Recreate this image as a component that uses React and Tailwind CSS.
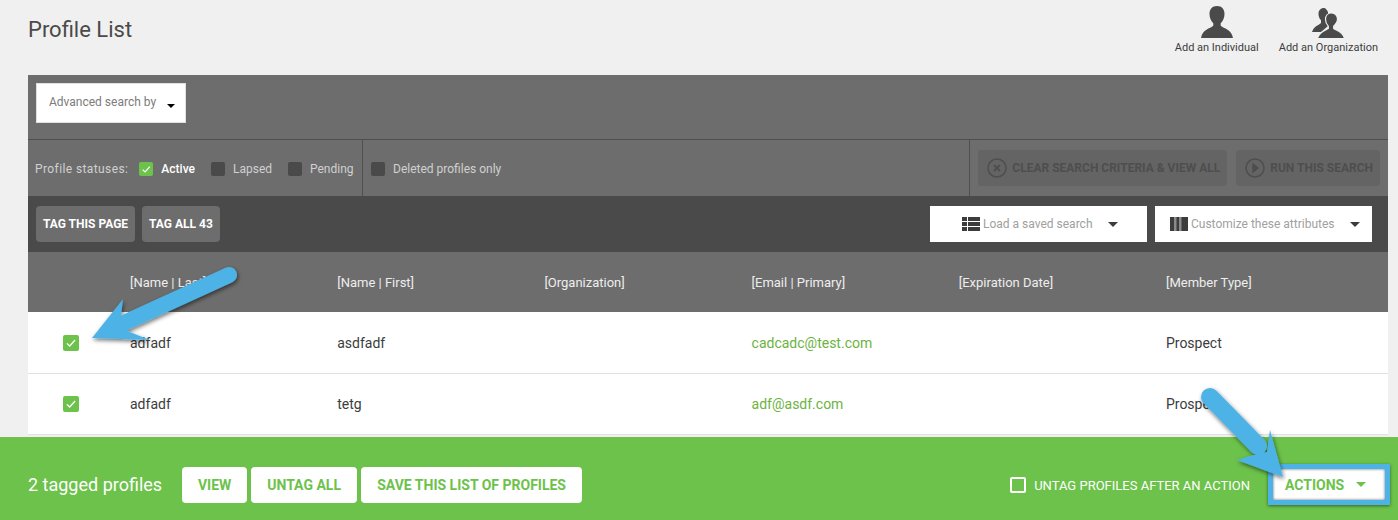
const columns = ["[Name | Last]", "[Name | First]", "[Organization]", "[Email | Primary]", "[Expiration Date]", "[Member Type]"];

const rows = [
  { last: "adfadf", first: "asdfadf", email: "cadcadc@test.com", type: "Prospect", height: "h-[62px]" },
  { last: "adfadf", first: "tetg", email: "adf@asdf.com", type: "Prospect", height: "h-[61px]" },
];

function Caret({ className }) {
  return <span className={`inline-block h-0 w-0 border-x-transparent ${className}`} />;
}

function GreenCheck({ size }) {
  return (
    <span className={`flex items-center justify-center rounded-[2px] bg-[#6cc24a] ${size}`}>
      <svg viewBox="0 0 16 16" className="h-3/4 w-3/4" fill="none" stroke="#fff" strokeWidth="1.8">
        <path d="M2.5 8.5 L6.2 12 L13.5 4" />
      </svg>
    </span>
  );
}

function StatusBox({ label }) {
  return (
    <div className="flex items-center gap-2">
      <span className="h-[14px] w-[14px] rounded-[2px] bg-[#4a4a4a]" />
      <span className="text-xs text-[#d0d0d0]">{label}</span>
    </div>
  );
}

function PersonIcon() {
  return (
    <svg viewBox="0 0 32 32" className="h-8 w-8" fill="#4a4a4a">
      <path d="M16 0c-5 0-7.5 3.4-7.5 8 0 3.6 1.6 7.200 3.800 9.200v2.600C9 22.600 1.600 23.400 0 32h32c-1.600-8.600-9-9.400-12.300-12.200v-2.600c2.200-2 3.800-5.600 3.800-9.200 0-4.600-2.500-8-7.500-8z" />
    </svg>
  );
}

function GroupIcon() {
  return (
    <svg viewBox="0 0 32 32" className="h-8 w-8" fill="#4a4a4a">
      <path d="M12 2C8.500 2 6.500 4.500 6.500 8c0 2.600 1 4.800 2.500 6.300V17c-2 2-7 3-9 9h9l7-6V6C14.500 3.500 13.500 2 12 2z" />
      <path stroke="#f0f0f0" strokeWidth="1.200" d="M19.500 7c-3.800 0-6 2.700-6 6.200 0 2.800 1.200 5.400 2.800 7v2.300C13.500 24.500 7.500 25 5.500 32.500h27c-1.800-7.500-8-8-10.800-10v-2.300c1.600-1.600 3.800-4.400 3.800-7C25.500 9.700 23.300 7 19.500 7z" />
    </svg>
  );
}

function ListIcon() {
  return (
    <svg viewBox="0 0 18 14" className="h-[14px] w-[18px]" fill="#3c3c3c">
      <path d="M0 0h5v4H0zM6 0h12v4H6zM0 5h5v4H0zM6 5h12v4H6zM0 10h5v4H0zM6 10h12v4H6z" />
    </svg>
  );
}

function ColumnsIcon() {
  return (
    <svg viewBox="0 0 18 14" className="h-[14px] w-[18px]" fill="#3c3c3c">
      <path fill="#8a8a8a" d="M0 0h18v14H0z" />
      <path d="M0 0h4v14H0zM6.500 0h2.500v14H6.500zM11.500 0h6.500v14h-6.500z" />
    </svg>
  );
}

function DisabledButton({ icon, label }) {
  return (
    <div className="flex h-9 items-center gap-[5px] rounded bg-[#646464] pl-[9px] pr-[7px] text-xs font-bold text-[#4e4e4e]">
      <svg viewBox="0 0 20 20" className="h-5 w-5" fill="none" stroke="#4e4e4e" strokeWidth="1.500">
        <circle cx="10" cy="10" r="9" />
        {icon === "x" ? <path d="M7 7l6 6M13 7l-6 6" strokeWidth="1.800" /> : <path d="M8 6l5 4-5 4z" fill="#4e4e4e" />}
      </svg>
      {label}
    </div>
  );
}

function Arrow({ line, head, width }) {
  return (
    <svg viewBox="0 0 1398 520" className="pointer-events-none absolute left-0 top-0 h-[520px] w-[1398px]">
      <defs>
        <filter id="arrowShadow" x="-30%" y="-30%" width="160%" height="160%">
          <feDropShadow dx="1" dy="2" stdDeviation="2" floodColor="#000" floodOpacity="0.55" />
        </filter>
      </defs>
      <g filter="url(#arrowShadow)" fill="#4db3e6" stroke="#4db3e6">
        <path d={line} strokeWidth={width} strokeLinecap="round" fill="none" />
        <polygon points={head} strokeWidth="0" />
      </g>
    </svg>
  );
}

export default function App() {
  return (
    <div className="relative h-[520px] w-[1398px] overflow-hidden bg-[#f0f0f0] font-['Roboto',sans-serif]">
      {/* Header */}
      <div className="flex h-[75px] items-start justify-between pl-7 pr-5">
        <h1 className="mt-4 text-[22px] leading-7 text-[#4a4a4a]">Profile List</h1>
        <div className="mt-[6px] flex gap-5">
          <div className="flex flex-col items-center gap-[2px] text-[11px] leading-4 text-[#3c3c3c]">
            <PersonIcon />
            Add an Individual
          </div>
          <div className="flex flex-col items-center gap-[2px] text-[11px] leading-4 text-[#3c3c3c]">
            <GroupIcon />
            Add an Organization
          </div>
        </div>
      </div>

      <div className="ml-7 w-[1360px]">
        {/* Search */}
        <div className="h-[65px] border-b border-[#4f4f4f] bg-[#6d6d6d] pl-2 pt-2">
          <div className="flex h-10 w-[150px] items-center gap-[11px] border border-[#e0e0e0] bg-white pb-[2px] pl-[12px] text-xs text-[#7c7c7c]">
            Advanced search by
            <Caret className="mt-[8px] border-x-[4px] border-t-[4px] border-t-black" />
          </div>
        </div>

        {/* Statuses */}
        <div className="flex h-[56px] bg-[#6d6d6d]">
          <div className="flex w-[335px] items-center border-r border-[#4f4f4f] pl-[7px] pt-[2px]">
            <span className="mr-[11px] text-xs tracking-[0.4px] text-[#d0d0d0]">Profile statuses:</span>
            <div className="mr-4 flex items-center gap-2">
              <GreenCheck size="h-[14px] w-[14px]" />
              <span className="text-xs font-medium text-white">Active</span>
            </div>
            <div className="mr-4">
              <StatusBox label="Lapsed" />
            </div>
            <StatusBox label="Pending" />
          </div>
          <div className="flex flex-1 items-center pl-2 pt-[2px]">
            <StatusBox label="Deleted profiles only" />
          </div>
          <div className="flex items-center gap-[9px] border-l border-[#4f4f4f] pl-2 pr-2">
            <DisabledButton icon="x" label="CLEAR SEARCH CRITERIA & VIEW ALL" />
            <DisabledButton icon="play" label="RUN THIS SEARCH" />
          </div>
        </div>

        {/* Tagging */}
        <div className="flex h-[56px] items-center justify-between bg-[#4a4a4a] pl-2 pr-4">
          <div className="flex gap-[7px]">
            <button className="h-9 rounded bg-[#6d6d6d] px-[7px] text-xs font-bold text-white">TAG THIS PAGE</button>
            <button className="h-9 rounded bg-[#6d6d6d] px-[7px] text-xs font-bold text-white">TAG ALL 43</button>
          </div>
          <div className="flex gap-2">
            <div className="flex h-9 w-[217px] items-center bg-white pl-8 text-xs text-[#a0a0a0]">
              <ListIcon />
              <span className="ml-[3px]">Load a saved search</span>
              <Caret className="ml-[15px] border-x-[5px] border-t-[5px] border-t-[#3c3c3c]" />
            </div>
            <div className="flex h-9 w-[217px] items-center bg-white pl-[15px] text-xs text-[#a0a0a0]">
              <ColumnsIcon />
              <span className="ml-[3px]">Customize these attributes</span>
              <Caret className="ml-[15px] border-x-[5px] border-t-[5px] border-t-[#3c3c3c]" />
            </div>
          </div>
        </div>

        {/* Table */}
        <div className="flex h-[60px] items-center bg-[#6d6d6d] pl-[102px] pt-[2px]">
          {columns.map((col) => (
            <div key={col} className="w-[207.2px] text-[13px] text-[#eeeeee]">{col}</div>
          ))}
        </div>
        {rows.map((row) => (
          <div key={row.first} className={`flex items-center border-b border-[#e2e2e2] bg-white text-sm text-[#3c3c3c] ${row.height}`}>
            <div className="flex w-[102px] justify-start pl-[35px]">
              <GreenCheck size="h-4 w-4" />
            </div>
            <div className="w-[207.2px]">{row.last}</div>
            <div className="w-[207.2px]">{row.first}</div>
            <div className="w-[207.2px]" />
            <div className="w-[207.2px] text-[#6cb33f]">{row.email}</div>
            <div className="w-[207.2px]" />
            <div className="w-[207.2px]">{row.type}</div>
          </div>
        ))}
      </div>

      {/* Tagged bar */}
      <div className="absolute bottom-0 left-0 flex h-[83px] w-full items-center justify-between bg-[#6cc24a] pl-7 pr-2 pt-3">
        <div className="flex items-center">
          <span className="mr-5 text-lg text-white">2 tagged profiles</span>
          <div className="flex gap-1">
            <button className="h-9 w-[65px] rounded bg-white text-sm font-bold text-[#6cc24a]">VIEW</button>
            <button className="h-9 w-[106px] rounded bg-white text-sm font-bold text-[#6cc24a]">UNTAG ALL</button>
            <button className="h-9 w-[221px] rounded bg-white text-sm font-bold text-[#6cc24a]">SAVE THIS LIST OF PROFILES</button>
          </div>
        </div>
        <div className="flex items-center">
          <span className="mr-2 h-4 w-4 rounded-[2px] border-2 border-white" />
          <span className="mr-[18px] pt-[3px] text-[13px] text-white">UNTAG PROFILES AFTER AN ACTION</span>
          <div className="flex h-[41px] w-[122px] items-center border-[5px] border-[#4db3e6] bg-white pl-3 text-sm font-bold text-[#6cc24a] shadow-[inset_0_0_3px_rgba(0,0,0,0.6),0_1px_3px_rgba(0,0,0,0.5)]">
            ACTIONS
            <Caret className="ml-3 border-x-[5px] border-t-[5px] border-t-[#6cc24a]" />
          </div>
        </div>
      </div>

      {/* Annotation arrows */}
      <Arrow width="16" line="M229 275 L124 323" head="92,338 123,299 121,316 127,331 150,340" />
      <Arrow width="18" line="M1210 397 L1258 446" head="1283,477 1270,430 1267,452 1250,456 1237,460" />
    </div>
  );
}
